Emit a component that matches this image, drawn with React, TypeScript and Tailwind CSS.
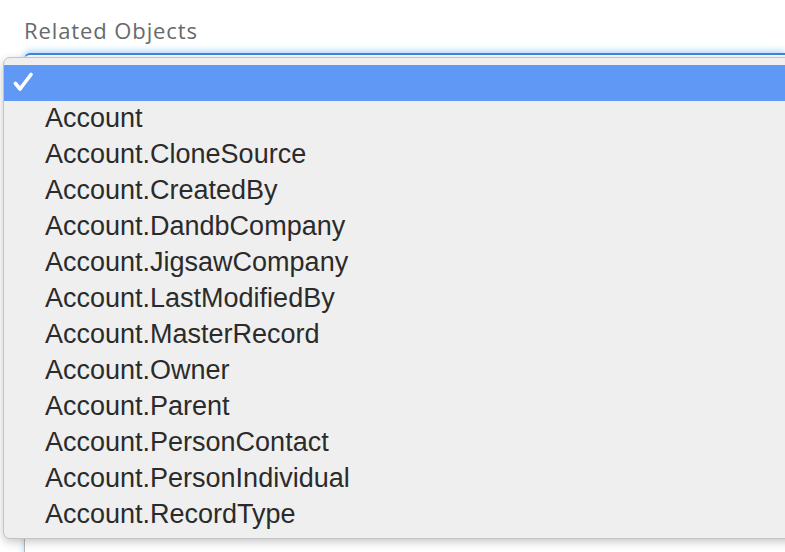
const items = [
  "Account",
  "Account.CloneSource",
  "Account.CreatedBy",
  "Account.DandbCompany",
  "Account.JigsawCompany",
  "Account.LastModifiedBy",
  "Account.MasterRecord",
  "Account.Owner",
  "Account.Parent",
  "Account.PersonContact",
  "Account.PersonIndividual",
  "Account.RecordType",
];

function Check() {
  return (
    <svg width="22" height="22" viewBox="0 0 22 22" className="ml-[9px]">
      <path
        d="M2.5 11.5 L7 17 L18 2.5"
        fill="none"
        stroke="white"
        strokeWidth="3.6"
        strokeLinecap="round"
        strokeLinejoin="round"
      />
    </svg>
  );
}

export default function App() {
  return (
    <div className="relative w-[785px] h-[552px] overflow-hidden bg-white">
      {/* field label */}
      <div className="pl-6 pt-4 text-[22px] leading-[28px] tracking-[0.9px] text-[#67696c] font-['Open_Sans',sans-serif]">
        Related Objects
      </div>

      {/* the select under the open menu */}
      <div className="ml-6 mt-[9px] h-[520px] rounded-tl-[6px] border-t-2 border-l border-t-[#3a86e2] border-l-[#b8b8b8] shadow-[0_-2px_7px_rgba(21,137,238,0.35)]" />

      {/* open native menu */}
      <div className="absolute left-[3px] top-[57px] w-[800px] rounded-[7px] border border-[#c4c4c4] bg-[#efefef] py-[7px] pb-[5px] shadow-[0_3px_10px_rgba(0,0,0,0.22)] font-['Liberation_Sans',Arial,sans-serif] text-[27px] text-[#2b2b2b]">
        <div className="flex h-[36px] items-center bg-[#5f98f5]">
          <Check />
        </div>
        {items.map((name) => (
          <div key={name} className="flex h-[36px] items-center pl-[41px] pb-[1px]">
            {name}
          </div>
        ))}
      </div>
    </div>
  );
}
